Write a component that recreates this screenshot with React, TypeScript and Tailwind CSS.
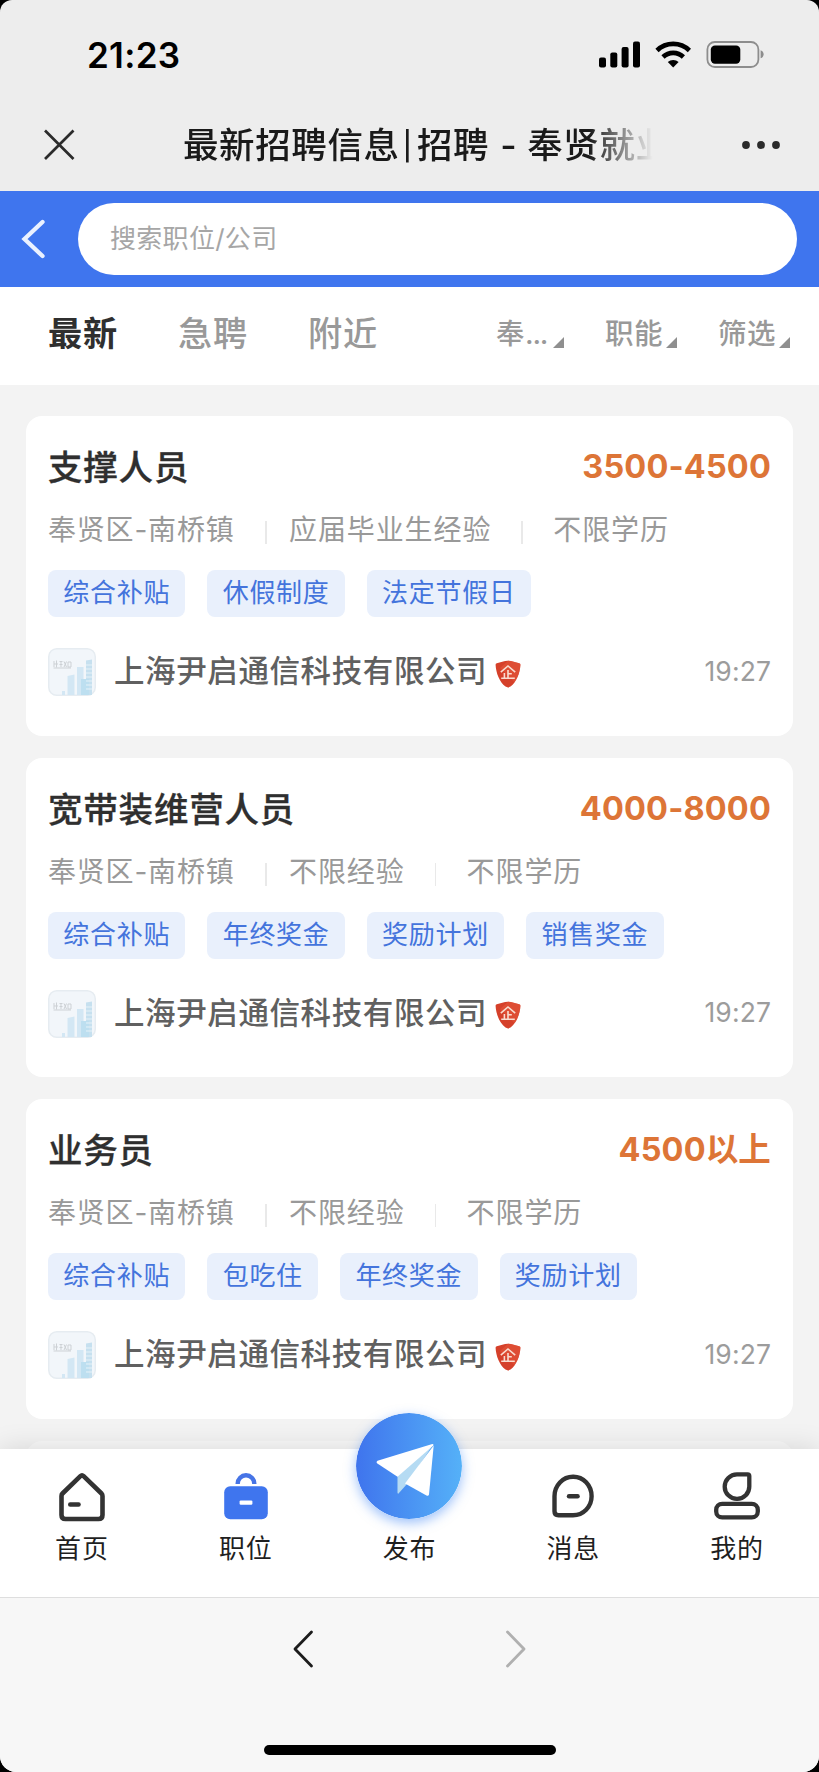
import React from "react";

type Job = {
  title: string;
  salary: string;
  meta: string[];
  tags: string[];
};

const company = "上海尹启通信科技有限公司";

const jobs: Job[] = [
  {
    title: "支撑人员",
    salary: "3500-4500",
    meta: ["奉贤区-南桥镇", "应届毕业生经验", "不限学历"],
    tags: ["综合补贴", "休假制度", "法定节假日"],
  },
  {
    title: "宽带装维营人员",
    salary: "4000-8000",
    meta: ["奉贤区-南桥镇", "不限经验", "不限学历"],
    tags: ["综合补贴", "年终奖金", "奖励计划", "销售奖金"],
  },
  {
    title: "业务员",
    salary: "4500以上",
    meta: ["奉贤区-南桥镇", "不限经验", "不限学历"],
    tags: ["综合补贴", "包吃住", "年终奖金", "奖励计划"],
  },
];

function StatusBar() {
  return (
    <div className="flex h-[100px] shrink-0 items-center justify-between pt-[9px] pr-[54px] pl-[87px]">
      <span className="text-[35px] leading-[40px] font-semibold tracking-[0.3px] text-black">21:23</span>
      <svg width="166" height="30" viewBox="0 0 166 30" className="block">
        <g>
          <rect x="0" y="17.5" width="7" height="10" rx="2" />
          <rect x="11.3" y="12.5" width="7" height="15" rx="2" />
          <rect x="22.6" y="7" width="7" height="20.5" rx="2" />
          <rect x="34" y="1.5" width="7" height="26" rx="2" />
        </g>
        <g fill="none" stroke="#000" strokeWidth="4.6">
          <path d="M58 10.5a23.2 23.2 0 0 1 32.4 0" />
          <path d="M64 17a14.6 14.6 0 0 1 20.4 0" />
        </g>
        <path d="M74.2 27.5l-5.4-5.4a7.8 7.8 0 0 1 10.8 0z" />
        <rect x="108.4" y="2" width="51" height="25" rx="7.5" fill="none" stroke="#8d8d8d" strokeWidth="1.8" />
        <rect x="111.8" y="5.4" width="29.5" height="18.4" rx="4.2" />
        <path d="M161.6 10.3c2 .6 3 2.2 3 4s-1 3.400-3 4z" fill="#8d8d8d" />
      </svg>
    </div>
  );
}

function TitleBar() {
  return (
    <div className="flex h-[91px] shrink-0 items-start pt-[20px] pr-[39px] pl-[43px]">
      <svg width="32" height="50" viewBox="0 0 32 50" className="mt-px block shrink-0">
        <path d="M2 9.500l28.500 28.500M30.500 9.500L2 38" stroke="#2b2b2b" strokeWidth="2.700" fill="none" />
      </svg>
      <div className="mt-px ml-[108px] w-[472px] overflow-hidden text-[35.5px] leading-[50px] font-medium tracking-[0.6px] whitespace-nowrap text-[#1a1a1a] [mask-image:linear-gradient(to_right,#000_86%,transparent_99.500%)]">
        最新招聘信息
        <span className="mr-[4px] ml-[3px] inline-block align-[2px] text-[28px] leading-[40px]">|</span>
        招聘<span className="ml-[1px]"> - </span>奉贤就业
      </div>
      <svg width="38" height="50" viewBox="0 0 38 50" className="mt-px ml-auto block shrink-0 fill-[#2b2b2b]">
        <circle cx="4" cy="24" r="3.900" />
        <circle cx="19" cy="24" r="3.900" />
        <circle cx="34" cy="24" r="3.900" />
      </svg>
    </div>
  );
}

function SearchBar() {
  return (
    <div className="flex h-[96px] shrink-0 items-center bg-[#3f75ee] pr-[22px] pl-[20px]">
      <svg width="26" height="42" viewBox="0 0 26 42" className="block shrink-0">
        <path d="M22.500 4L4.500 21l18 17" fill="none" stroke="#eaf1ff" strokeWidth="4.300" strokeLinecap="round" />
      </svg>
      <div className="ml-[32px] flex h-[72px] flex-1 items-center rounded-full bg-white pb-[2px] pl-[32px] text-[26px] tracking-[0.300px] text-[#a6a6a6]">
        搜索职位/公司
      </div>
    </div>
  );
}

function Filter({ label, className }: { label: string; className: string }) {
  return (
    <div className={`flex items-end whitespace-nowrap ${className}`}>
      <span className="text-[28.5px] leading-[40px] font-medium tracking-[0.6px] text-[#999]">
        {label.replace("...", "")}
        {label.endsWith("...") && <span className="tracking-[-1.300px]">...</span>}
      </span>
      <svg width="11" height="11" viewBox="0 0 11 11" className="mb-[6px] ml-auto block">
        <path d="M11 0v11H0z" fill="#8f8f8f" />
      </svg>
    </div>
  );
}

function Tabs() {
  return (
    <div className="flex h-[98px] shrink-0 items-start bg-white pt-[22px] pl-[48px] text-[34.200px] leading-[50px] tracking-[0.900px]">
      <span className="w-[130px] font-bold text-[#2f2f2f]">最新</span>
      <span className="w-[130px] font-medium text-[#999]">急聘</span>
      <span className="w-[188px] font-medium text-[#999]">附近</span>
      <div className="flex pt-[5px]">
        <Filter label="奉..." className="w-[68px]" />
        <Filter label="职能" className="ml-[41px] w-[72px]" />
        <Filter label="筛选" className="ml-[41px] w-[72px]" />
      </div>
    </div>
  );
}

function CompanyLogo() {
  return (
    <svg width="48" height="48" viewBox="0 0 48 48" className="block shrink-0">
      <rect x=".75" y=".75" width="46.500" height="46.500" rx="8" fill="#f2f6fa" stroke="#e6ecf1" strokeWidth="1.500" />
      <g fill="#d3e7f4">
        <path d="M19.500 28l7-1.500V47h-7z" />
        <path d="M29 19h6.500v28H29z" />
        <path d="M38 12.500l6-1V47h-6z" fill="#c6e0ef" />
        <path d="M33 31h8v16h-8z" fill="#bddff0" />
        <path d="M14 43h3v4h-3z" />
      </g>
      <path d="M38 17h6M38 21h6M38 25h6M38 29h6M38 33h6M38 37h6M38 41h6" stroke="#e6f2f8" strokeWidth="1" />
      <path d="M5.500 20h17.500M6 13v6M8.500 12.500v7M6 16h4M11.500 13.500h3M11.500 16.500h3M13 13v6M16 13.500l2.500 5.500M18.500 13.500l-2.500 5.500M20 14h3v5h-3z" stroke="#cdd1d5" strokeWidth="1" fill="none" />
    </svg>
  );
}

function VerifiedBadge() {
  return (
    <svg width="26" height="28" viewBox="0 0 26 28" className="mt-[3px] block shrink-0">
      <path
        d="M1.800 3.200C5.500 2.600 9 .8 13 .8s7.500 1.800 11.200 2.400c.9.200 1.300.8 1.200 1.800C25 13 21.500 22 15.500 26.600c-1.700 1.100-3.300 1.100-5 0C4.500 22 1 13 .6 5c-.1-1 .3-1.600 1.200-1.800z"
        fill="#d5402a"
      />
      <path d="M13 .8c4 0 7.500 1.800 11.200 2.400.9.200 1.300.8 1.200 1.800-.3 6-2.300 12.500-5.900 17.200L5 8z" fill="#e5573a" opacity=".6" />
      <g fill="none" stroke="#f9dccf" strokeWidth="1.600">
        <path d="M5.800 12.200L13 6l7.200 6.200" />
        <path d="M13 10v8M13 13.800h3.800M9.400 13v5M6.200 18.200h13.600" />
      </g>
    </svg>
  );
}

function JobCard({ job }: { job: Job }) {
  return (
    <article className="h-[319.500px] shrink-0 rounded-[16px] bg-white pt-[31px] pr-[22px] pl-[22px]">
      <div className="flex h-[40px] items-center justify-between">
        <h2 className="pt-[2px] text-[34.500px] leading-[40px] font-medium tracking-[0.800px] text-[#2f2f2f] [-webkit-text-stroke:0.300px_#2f2f2f]">{job.title}</h2>
        <span className="text-[32.500px] leading-[40px] font-bold tracking-[0.150px] text-[#dd7537]">{job.salary}</span>
      </div>
      <div className="mt-[25px] flex h-[36px] items-center text-[28px] leading-[36px] tracking-[0.800px] text-[#999]">
        <span>{job.meta[0]}</span>
        <i className="mt-[5px] mr-[22px] ml-[31px] h-[23px] w-[1.500px] bg-[#e9e9e9]" />
        <span className="tracking-[0.900px]">{job.meta[1]}</span>
        <i className="mt-[5px] mr-[30.500px] ml-[30px] h-[23px] w-[1.500px] bg-[#e9e9e9]" />
        <span className="tracking-[0.900px]">{job.meta[2]}</span>
      </div>
      <div className="mt-[22px] flex gap-[22px]">
        {job.tags.map((tag) => (
          <span key={tag} className="h-[47px] rounded-[8px] bg-[#e9f0fc] px-[15.300px] text-[26px] leading-[46px] tracking-[0.700px] text-[#4474dc]">
            {tag}
          </span>
        ))}
      </div>
      <div className="mt-[31px] flex h-[48px] items-center">
        <CompanyLogo />
        <span className="mr-[8px] ml-[18px] pb-[2px] text-[30.500px] leading-[44px] font-medium tracking-[0.600px] text-[#606060]">{company}</span>
        <VerifiedBadge />
        <time className="ml-auto pb-px text-[26.500px] tracking-[0.100px] text-[#9c9c9c]">19:27</time>
      </div>
    </article>
  );
}

function NavItem({ label, children }: { label: string; children: React.ReactNode }) {
  return (
    <div className="flex flex-1 flex-col items-center">
      {children}
      <span className="pt-px text-[26px] leading-[38px] tracking-[0.800px] text-[#1f1f1f]">{label}</span>
    </div>
  );
}

const iconClass = "mt-[18px] mb-[6px] block h-[56px] w-[56px] shrink-0";

function BottomNav() {
  return (
    <nav className="relative flex h-[148px] shrink-0 bg-white shadow-[0_0_26px_rgba(0,0,0,0.130)]">
      <NavItem label="首页">
        <svg viewBox="0 0 56 56" className={iconClass} fill="none" stroke="#333" strokeWidth="4.600" strokeLinecap="round" strokeLinejoin="round">
          <path d="M26.400 9.200Q28 7.600 29.600 9.200L47.500 26.500Q48.500 27.500 48.500 29V48Q48.500 52 44.500 52H11.500Q7.500 52 7.500 48V29Q7.500 27.500 8.500 26.500Z" />
          <path d="M16.200 37.500h8.400" strokeWidth="4.400" />
        </svg>
      </NavItem>
      <NavItem label="职位">
        <svg viewBox="0 0 56 56" className={iconClass}>
          <rect x="6.200" y="19.300" width="43.600" height="33" rx="6" fill="#3f75ee" />
          <path d="M19.500 17v-.4a8.300 8.300 0 0 1 16.600 0v.4" transform="translate(.2 0)" fill="none" stroke="#4674e6" strokeWidth="4.400" />
          <rect x="21.600" y="33.400" width="12.800" height="4.400" rx="1.200" fill="#fff" />
        </svg>
      </NavItem>
      <NavItem label="发布">
        <svg width="106" height="106" viewBox="0 0 106 106" className="-mt-[36px] mb-[10px] block shrink-0 rounded-full shadow-[0_4px_12px_rgba(63,133,245,0.500)]">
          <defs>
            <linearGradient id="publish" x1="0" x2="1" y1="0" y2="0">
              <stop offset="0" stopColor="#3f74ed" />
              <stop offset="1" stopColor="#55b1f8" />
            </linearGradient>
          </defs>
          <circle cx="53" cy="53" r="53" fill="url(#publish)" />
          <path d="M41.500 62L76.500 32.500 51 71 42.500 80.500q-1 .5-1-1z" fill="#b5dbf3" />
          <path d="M21.500 47.800L75.500 31.200q2.500-.5 1.800 1.300L41.500 63.800 21 50.300q-1.200-1.500.5-2.500z" fill="#fff" />
          <path d="M77.700 32.500L73 81.500q-.6 2-2.500 1L49 70.500z" fill="#fff" />
        </svg>
      </NavItem>
      <NavItem label="消息">
        <svg viewBox="0 0 56 56" className={iconClass} fill="none" stroke="#333" strokeWidth="4.400" strokeLinecap="round">
          <path d="M28 9.700A18.300 19.600 0 0 1 46.600 29.300A18.600 19 0 0 1 28 48.300H13.500Q9.500 48.300 9.500 44.300V29.300A18.500 19.600 0 0 1 28 9.700Z" />
          <path d="M24 29.300h8.600" />
        </svg>
      </NavItem>
      <NavItem label="我的">
        <svg viewBox="0 0 56 56" className={iconClass} fill="none" stroke="#333" strokeWidth="4.300">
          <path d="M28 7.300H38.600Q40.300 7.300 40.300 9V19.500A12.300 12.300 0 1 1 28 7.300Z" />
          <rect x="7.200" y="36.800" width="41.600" height="13.600" rx="6" />
        </svg>
      </NavItem>
    </nav>
  );
}

function BrowserBar() {
  return (
    <footer className="relative flex h-[175px] shrink-0 flex-col items-center border-t border-[#dedede] bg-[#f7f7f7]">
      <div className="mt-[32px] flex w-[233px] justify-between">
        <svg width="22" height="38" viewBox="0 0 22 38" className="block">
          <path d="M18.500 2L2 19l16.500 17" fill="none" stroke="#1c1c1c" strokeWidth="2.800" strokeLinecap="round" strokeLinejoin="round" />
        </svg>
        <svg width="22" height="38" viewBox="0 0 22 38" className="block">
          <path d="M3.500 2L20 19 3.500 36" fill="none" stroke="#b0b0b0" strokeWidth="2.800" strokeLinecap="round" strokeLinejoin="round" />
        </svg>
      </div>
      <div className="mt-auto mb-[17px] h-[10.500px] w-[292px] rounded-full bg-black" />
    </footer>
  );
}

export default function App() {
  return (
    <div className="h-[1772px] w-[819px] bg-black font-['Inter','Noto_Sans_CJK_SC',sans-serif]">
      <div className="flex h-full flex-col overflow-hidden rounded-t-[12px] rounded-b-[16px] bg-[#ededed]">
        <StatusBar />
        <TitleBar />
        <SearchBar />
        <Tabs />
        <main className="flex min-h-0 flex-1 flex-col gap-[22px] overflow-hidden bg-[#f3f3f3] px-[26px] pt-[31px]">
          {jobs.map((job) => (
            <JobCard key={job.title} job={job} />
          ))}
          <div className="h-[40px] shrink-0 rounded-[16px] bg-[#f8f8f8]" />
        </main>
        <BottomNav />
        <BrowserBar />
      </div>
    </div>
  );
}
